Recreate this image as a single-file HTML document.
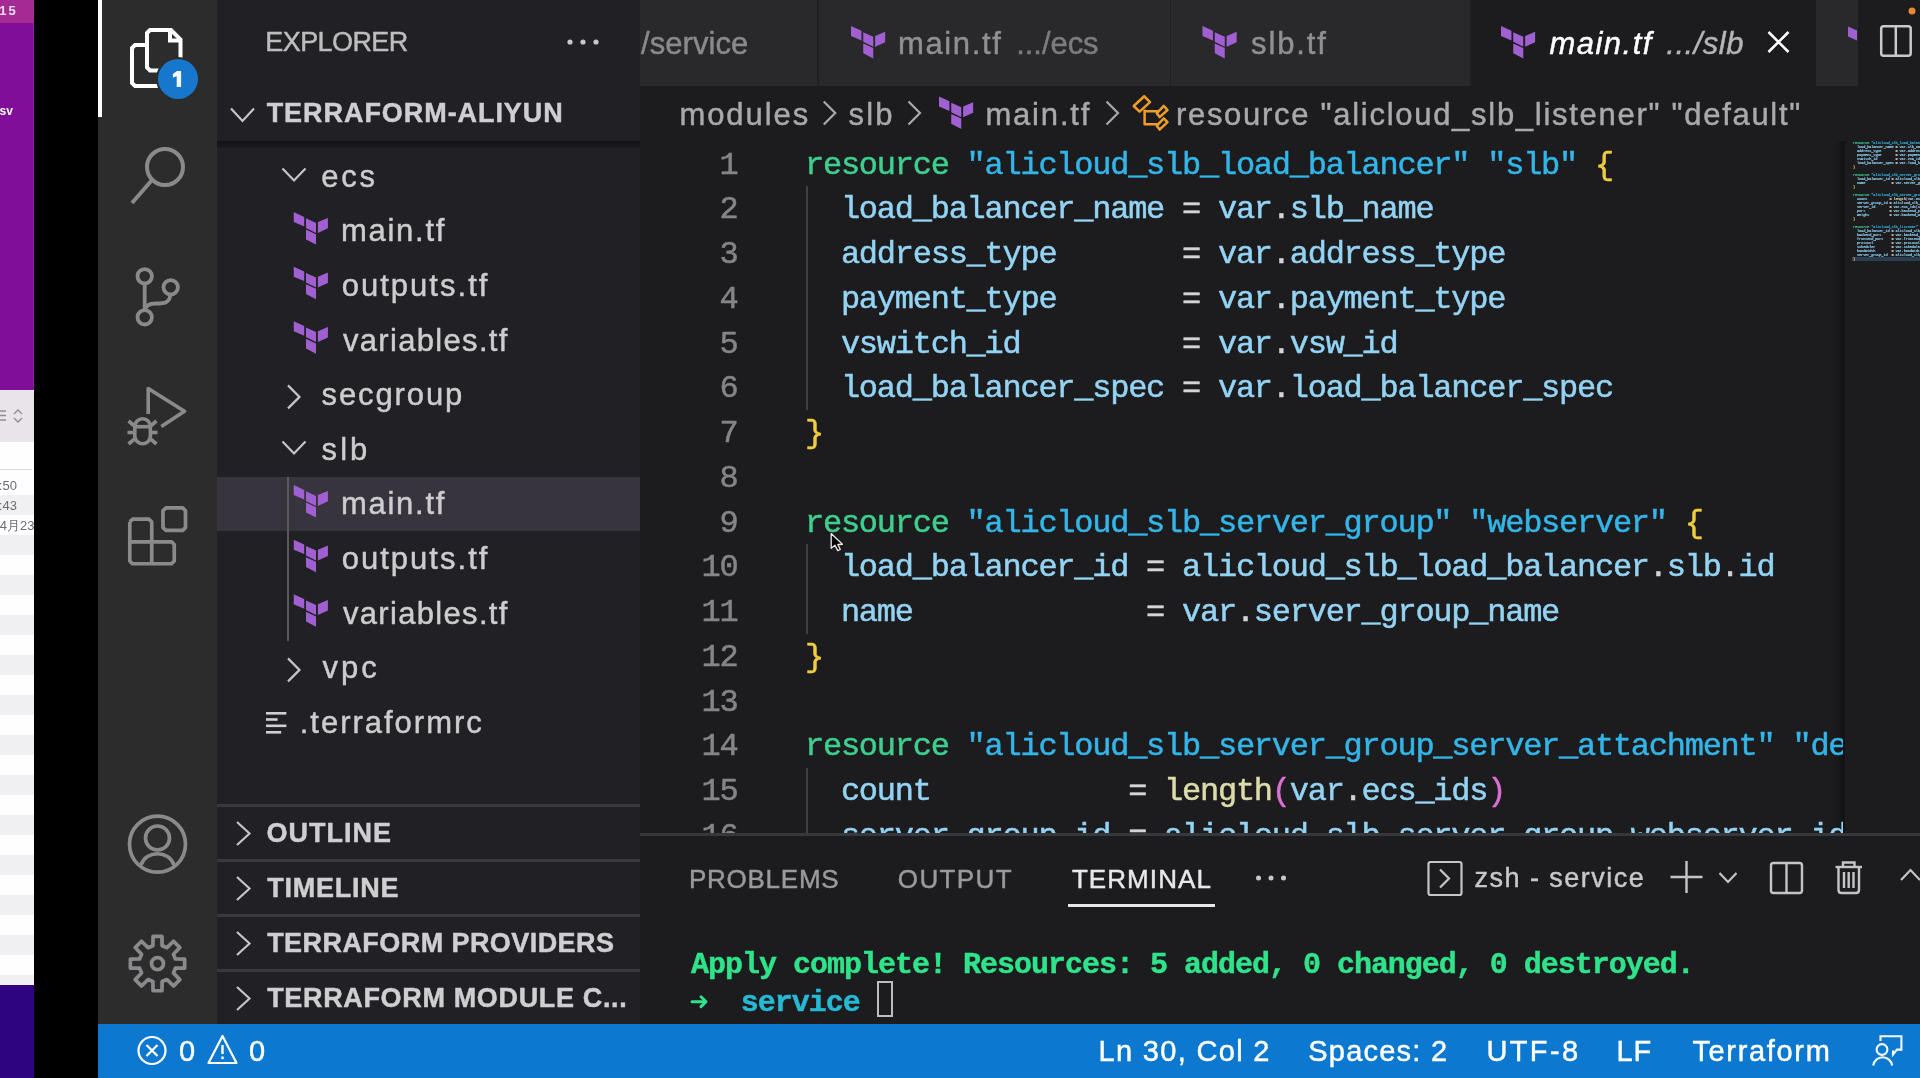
<!DOCTYPE html>
<html><head><meta charset="utf-8"><style>
html,body{margin:0;padding:0;width:1920px;height:1078px;overflow:hidden;background:#1c1b1e}
body{will-change:transform;filter:blur(0.45px)}
body>div{position:absolute}
.t{-webkit-text-stroke:0.45px currentColor}
.c{-webkit-text-stroke:0.5px currentColor}
svg{position:absolute;overflow:visible}
</style></head><body>
<div style="left:0px;top:0px;width:34px;height:390px;background:#810e99;"></div>
<div style="left:33px;top:0px;width:1.5px;height:390px;background:#8c1ca3;"></div>
<div style="left:0px;top:0px;width:34px;height:23px;background:#a52a93;"></div>
<div class="t" style="left:-0.80px;top:3.50px;font-family:'Liberation Sans', sans-serif;font-size:13px;line-height:13px;font-weight:bold;font-style:normal;letter-spacing:2.000px;color:#f6dcf2;white-space:pre;-webkit-text-stroke:0">15</div>
<div class="t" style="left:-0.40px;top:104.84px;font-family:'Liberation Sans', sans-serif;font-size:12px;line-height:12px;font-weight:bold;font-style:normal;letter-spacing:0.000px;color:#ffffff;white-space:pre;-webkit-text-stroke:0">sv</div>
<div style="left:0px;top:390px;width:34px;height:52px;background:#e8e4ea;"></div>
<div style="left:0px;top:442px;width:34px;height:543px;background:#fefdff;"></div>
<div style="left:0px;top:469px;width:32px;height:1px;background:#dedbe0;"></div>
<div style="left:0px;top:495px;width:34px;height:19.5px;background:#f0eff2;"></div>
<div style="left:0px;top:535px;width:34px;height:19.5px;background:#f0eff2;"></div>
<div style="left:0px;top:575px;width:34px;height:19.5px;background:#f0eff2;"></div>
<div style="left:0px;top:615px;width:34px;height:19.5px;background:#f0eff2;"></div>
<div style="left:0px;top:655px;width:34px;height:19.5px;background:#f0eff2;"></div>
<div style="left:0px;top:695px;width:34px;height:19.5px;background:#f0eff2;"></div>
<div style="left:0px;top:735px;width:34px;height:19.5px;background:#f0eff2;"></div>
<div style="left:0px;top:775px;width:34px;height:19.5px;background:#f0eff2;"></div>
<div style="left:0px;top:815px;width:34px;height:19.5px;background:#f0eff2;"></div>
<div style="left:0px;top:855px;width:34px;height:19.5px;background:#f0eff2;"></div>
<div style="left:0px;top:895px;width:34px;height:19.5px;background:#f0eff2;"></div>
<div style="left:0px;top:935px;width:34px;height:19.5px;background:#f0eff2;"></div>
<div style="left:0px;top:975px;width:34px;height:10px;background:#f0eff2;"></div>
<div class="t" style="left:-1.20px;top:479.00px;font-family:'Liberation Sans', sans-serif;font-size:13px;line-height:13px;font-weight:normal;font-style:normal;letter-spacing:0.000px;color:#6e6e70;white-space:pre;-webkit-text-stroke:0">:50</div>
<div class="t" style="left:-1.20px;top:499.00px;font-family:'Liberation Sans', sans-serif;font-size:13px;line-height:13px;font-weight:normal;font-style:normal;letter-spacing:0.000px;color:#6e6e70;white-space:pre;-webkit-text-stroke:0">:43</div>
<div class="t" style="left:-0.30px;top:519.00px;font-family:'Liberation Sans', sans-serif;font-size:13px;line-height:13px;font-weight:normal;font-style:normal;letter-spacing:0.000px;color:#6e6e70;white-space:pre;-webkit-text-stroke:0">4月23</div>
<svg style="position:absolute;left:0px;top:400px" width="34" height="30" viewBox="0 400 34 30"><g stroke="#8e8e92" stroke-width="1.3" fill="none"><path d="M0,411H6M0,415.5H6M0,420H6"/><path d="M14,414L18,410L22,414M14,418L18,422L22,418"/></g></svg>
<div style="left:0px;top:985px;width:34px;height:93px;background:#2e0481;"></div>
<div style="left:34px;top:0px;width:64px;height:1078px;background:#000000;"></div>
<div style="left:98px;top:0px;width:119px;height:1024px;background:#2c2c2d;"></div>
<div style="left:98px;top:0px;width:4px;height:117px;background:#ffffff;"></div>
<svg style="position:absolute;left:98px;top:0px" width="119" height="120" viewBox="98 0 119 120"><g fill="none" stroke="#ffffff" stroke-width="4" stroke-linejoin="miter"><path d="M147,33 L150,30 L171,30 L180.5,39.5 L180.5,68 L177.5,70.5 L150,70.5 L147,67.5 Z"/><path d="M170,31 L170,40.5 L180,40.5"/><path d="M147,45 L135,45 L132,48 L132,83 L135,86 L165,86"/></g><circle cx="178" cy="78.9" r="22" fill="#2c2c2d"/><circle cx="178" cy="78.9" r="20" fill="#1677cc"/></svg>
<svg style="position:absolute;left:160px;top:60px" width="40" height="40" viewBox="160 60 40 40"><path d="M172.9,74 L177,71.1 L181.1,71.1 L181.1,86.9 L176.7,86.9 L176.7,76.2 L172.9,77.6Z" fill="#f4fbff"/></svg>
<svg style="position:absolute;left:98px;top:130px" width="119" height="90" viewBox="98 130 119 90"><g fill="none" stroke="#8a8a8c" stroke-width="4"><circle cx="165" cy="167" r="18"/><path d="M152,180 L132,203" stroke-linecap="butt"/></g></svg>
<svg style="position:absolute;left:98px;top:250px" width="119" height="90" viewBox="98 250 119 90"><g fill="none" stroke="#8a8a8c" stroke-width="3.8"><circle cx="144.7" cy="276.3" r="7.2"/><circle cx="170.7" cy="287.3" r="7.2"/><circle cx="144.7" cy="317.3" r="7.2"/><path d="M144.7,283.5 V310"/><path d="M170.2,294.5 C170,303 164,303.5 156,303.5 C149,303.5 145.5,306 144.7,310"/></g></svg>
<svg style="position:absolute;left:98px;top:370px" width="119" height="90" viewBox="98 370 119 90"><g fill="none" stroke="#8a8a8c" stroke-width="3.6"><path d="M148.2,414 V388.5 L184.5,411.3 L161.3,426.5" stroke-linejoin="round"/><path d="M134.8,426.5 A7.8,7.8 0 0 1 150.4,426.5 V436 A7.8,7.8 0 0 1 134.8,436 Z"/><path d="M134,426.7 H151"/><path d="M128.5,421 L134.5,426 M156.5,421 L150.5,426 M127.5,432.5 H133.5 M151.5,432.5 H157.5 M128.5,444 L134.5,439 M156.5,444 L150.5,439"/></g></svg>
<svg style="position:absolute;left:98px;top:490px" width="119" height="90" viewBox="98 490 119 90"><g fill="none" stroke="#8a8a8c" stroke-width="3.7" stroke-linejoin="round"><path d="M129.8,522 L132.5,519.2 L149,519.2 L151.75,522 V563.75 M129.8,522 V561 L132.5,563.75 H171.5 L174.25,561 V544.5 L171.5,541.8 H129.8"/><path d="M166,507.9 H182.7 L185.5,510.7 V527.6 L182.7,530.4 H166 L163,527.6 V510.7 Z"/></g></svg>
<svg style="position:absolute;left:98px;top:800px" width="119" height="90" viewBox="98 800 119 90"><g fill="none" stroke="#8a8a8c" stroke-width="3.7"><circle cx="157.5" cy="844.2" r="28"/><circle cx="157.5" cy="838" r="12"/><path d="M141,865 C146,850 169,850 174,865"/></g></svg>
<svg style="position:absolute;left:98px;top:920px" width="119" height="90" viewBox="98 920 119 90"><g fill="none" stroke="#8a8a8c" stroke-width="3.7" stroke-linejoin="round"><path d="M152.90,945.68 L153.03,936.47 L161.97,936.47 L162.10,945.68 L166.92,947.68 L173.52,941.25 L179.85,947.58 L173.42,954.18 L175.42,959.00 L184.63,959.13 L184.63,968.07 L175.42,968.20 L173.42,973.02 L179.85,979.62 L173.52,985.95 L166.92,979.52 L162.10,981.52 L161.97,990.73 L153.03,990.73 L152.90,981.52 L148.08,979.52 L141.48,985.95 L135.15,979.62 L141.58,973.02 L139.58,968.20 L130.37,968.07 L130.37,959.13 L139.58,959.00 L141.58,954.18 L135.15,947.58 L141.48,941.25 L148.08,947.68Z"/><circle cx="157.5" cy="963.6" r="6"/></g></svg>
<div style="left:217px;top:0px;width:423px;height:1024px;background:#212024;"></div>
<div class="t" style="left:265.30px;top:29.14px;font-family:'Liberation Sans', sans-serif;font-size:27px;line-height:27px;font-weight:normal;font-style:normal;letter-spacing:-0.586px;color:#bdbdbf;white-space:pre;">EXPLORER</div>
<svg style="position:absolute;left:540px;top:30px" width="80" height="30" viewBox="540 30 80 30"><g fill="#c8c8c8"><circle cx="570" cy="42" r="2.6"/><circle cx="583" cy="42" r="2.6"/><circle cx="596" cy="42" r="2.6"/></g></svg>
<svg style="position:absolute;left:0px;top:0px" width="1920" height="1078" viewBox="0 0 1920 1078"><path d="M231,108.5 L242.5,121 L254,108.5" fill="none" stroke="#c5c5c7" stroke-width="2.2"/></svg>
<div class="t" style="left:266.70px;top:99.64px;font-family:'Liberation Sans', sans-serif;font-size:27px;line-height:27px;font-weight:bold;font-style:normal;letter-spacing:0.940px;color:#cfcfd2;white-space:pre;">TERRAFORM-ALIYUN</div>
<div style="left:217px;top:141px;width:423px;height:7px;background:linear-gradient(#131216,#1b1a1e);"></div>
<div style="left:217px;top:476.5px;width:423px;height:54.5px;background:#37343d;"></div>
<div style="left:287px;top:476.5px;width:2px;height:164.5px;background:#5a5960;"></div>
<div class="t" style="left:321.20px;top:160.76px;font-family:'Liberation Sans', sans-serif;font-size:31px;line-height:31px;font-weight:normal;font-style:normal;letter-spacing:2.725px;color:#cdcdcf;white-space:pre;">ecs</div>
<div class="t" style="left:340.90px;top:215.36px;font-family:'Liberation Sans', sans-serif;font-size:31px;line-height:31px;font-weight:normal;font-style:normal;letter-spacing:1.750px;color:#cdcdcf;white-space:pre;">main.tf</div>
<div class="t" style="left:341.70px;top:269.96px;font-family:'Liberation Sans', sans-serif;font-size:31px;line-height:31px;font-weight:normal;font-style:normal;letter-spacing:2.022px;color:#cdcdcf;white-space:pre;">outputs.tf</div>
<div class="t" style="left:342.90px;top:324.56px;font-family:'Liberation Sans', sans-serif;font-size:31px;line-height:31px;font-weight:normal;font-style:normal;letter-spacing:1.327px;color:#cdcdcf;white-space:pre;">variables.tf</div>
<div class="t" style="left:321.60px;top:379.16px;font-family:'Liberation Sans', sans-serif;font-size:31px;line-height:31px;font-weight:normal;font-style:normal;letter-spacing:1.886px;color:#cdcdcf;white-space:pre;">secgroup</div>
<div class="t" style="left:321.60px;top:433.76px;font-family:'Liberation Sans', sans-serif;font-size:31px;line-height:31px;font-weight:normal;font-style:normal;letter-spacing:3.050px;color:#cdcdcf;white-space:pre;">slb</div>
<div class="t" style="left:340.90px;top:488.36px;font-family:'Liberation Sans', sans-serif;font-size:31px;line-height:31px;font-weight:normal;font-style:normal;letter-spacing:1.750px;color:#cdcdcf;white-space:pre;">main.tf</div>
<div class="t" style="left:341.70px;top:542.96px;font-family:'Liberation Sans', sans-serif;font-size:31px;line-height:31px;font-weight:normal;font-style:normal;letter-spacing:2.022px;color:#cdcdcf;white-space:pre;">outputs.tf</div>
<div class="t" style="left:342.90px;top:597.56px;font-family:'Liberation Sans', sans-serif;font-size:31px;line-height:31px;font-weight:normal;font-style:normal;letter-spacing:1.327px;color:#cdcdcf;white-space:pre;">variables.tf</div>
<div class="t" style="left:322.40px;top:652.16px;font-family:'Liberation Sans', sans-serif;font-size:31px;line-height:31px;font-weight:normal;font-style:normal;letter-spacing:3.100px;color:#cdcdcf;white-space:pre;">vpc</div>
<div class="t" style="left:299.70px;top:706.76px;font-family:'Liberation Sans', sans-serif;font-size:31px;line-height:31px;font-weight:normal;font-style:normal;letter-spacing:1.991px;color:#cdcdcf;white-space:pre;">.terraformrc</div>
<svg style="position:absolute;left:0px;top:0px" width="1920" height="1078" viewBox="0 0 1920 1078"><path d="M282.5,168.5 L294,180.5 L305.5,168.5" fill="none" stroke="#c5c5c7" stroke-width="2.2"/><path d="M293.75,212.10 L304.20,216.90 L304.20,226.50 L293.75,222.10Z M306.00,218.35 L316.00,222.90 L316.00,232.90 L306.00,227.90Z M306.00,229.60 L316.00,234.20 L316.00,244.60 L306.00,239.40Z M317.90,222.10 L327.90,217.90 L327.90,228.35 L317.90,232.90Z " fill="#a060d2"/><path d="M293.75,266.70 L304.20,271.50 L304.20,281.10 L293.75,276.70Z M306.00,272.95 L316.00,277.50 L316.00,287.50 L306.00,282.50Z M306.00,284.20 L316.00,288.80 L316.00,299.20 L306.00,294.00Z M317.90,276.70 L327.90,272.50 L327.90,282.95 L317.90,287.50Z " fill="#a060d2"/><path d="M293.75,321.30 L304.20,326.10 L304.20,335.70 L293.75,331.30Z M306.00,327.55 L316.00,332.10 L316.00,342.10 L306.00,337.10Z M306.00,338.80 L316.00,343.40 L316.00,353.80 L306.00,348.60Z M317.90,331.30 L327.90,327.10 L327.90,337.55 L317.90,342.10Z " fill="#a060d2"/><path d="M288,385.4 L299.5,396.9 L288,408.4" fill="none" stroke="#c5c5c7" stroke-width="2.2"/><path d="M282.5,441.5 L294,453.5 L305.5,441.5" fill="none" stroke="#c5c5c7" stroke-width="2.2"/><path d="M293.75,485.10 L304.20,489.90 L304.20,499.50 L293.75,495.10Z M306.00,491.35 L316.00,495.90 L316.00,505.90 L306.00,500.90Z M306.00,502.60 L316.00,507.20 L316.00,517.60 L306.00,512.40Z M317.90,495.10 L327.90,490.90 L327.90,501.35 L317.90,505.90Z " fill="#a060d2"/><path d="M293.75,539.70 L304.20,544.50 L304.20,554.10 L293.75,549.70Z M306.00,545.95 L316.00,550.50 L316.00,560.50 L306.00,555.50Z M306.00,557.20 L316.00,561.80 L316.00,572.20 L306.00,567.00Z M317.90,549.70 L327.90,545.50 L327.90,555.95 L317.90,560.50Z " fill="#a060d2"/><path d="M293.75,594.30 L304.20,599.10 L304.20,608.70 L293.75,604.30Z M306.00,600.55 L316.00,605.10 L316.00,615.10 L306.00,610.10Z M306.00,611.80 L316.00,616.40 L316.00,626.80 L306.00,621.60Z M317.90,604.30 L327.90,600.10 L327.90,610.55 L317.90,615.10Z " fill="#a060d2"/><path d="M288,658.4000000000001 L299.5,669.9000000000001 L288,681.4000000000001" fill="none" stroke="#c5c5c7" stroke-width="2.2"/><rect x="266" y="712.0" width="20.399999999999977" height="2.6" fill="#d0d0d4"/><rect x="266" y="718.2" width="11.600000000000023" height="2.6" fill="#d0d0d4"/><rect x="266" y="724.5" width="20.399999999999977" height="2.6" fill="#d0d0d4"/><rect x="266" y="731.0" width="15.199999999999989" height="2.6" fill="#d0d0d4"/></svg>
<div style="left:217px;top:804px;width:423px;height:2.5px;background:#39383d;"></div>
<div class="t" style="left:266.40px;top:820.14px;font-family:'Liberation Sans', sans-serif;font-size:27px;line-height:27px;font-weight:bold;font-style:normal;letter-spacing:1.017px;color:#cfcfd2;white-space:pre;">OUTLINE</div>
<svg style="position:absolute;left:0px;top:0px" width="1920" height="1078" viewBox="0 0 1920 1078"><path d="M237,822 L249.5,833.5 L237,845" fill="none" stroke="#c5c5c7" stroke-width="2.2"/></svg>
<div style="left:217px;top:859px;width:423px;height:2.5px;background:#39383d;"></div>
<div class="t" style="left:267.20px;top:875.14px;font-family:'Liberation Sans', sans-serif;font-size:27px;line-height:27px;font-weight:bold;font-style:normal;letter-spacing:0.757px;color:#cfcfd2;white-space:pre;">TIMELINE</div>
<svg style="position:absolute;left:0px;top:0px" width="1920" height="1078" viewBox="0 0 1920 1078"><path d="M237,877 L249.5,888.5 L237,900" fill="none" stroke="#c5c5c7" stroke-width="2.2"/></svg>
<div style="left:217px;top:914px;width:423px;height:2.5px;background:#39383d;"></div>
<div class="t" style="left:267.20px;top:930.14px;font-family:'Liberation Sans', sans-serif;font-size:27px;line-height:27px;font-weight:bold;font-style:normal;letter-spacing:0.433px;color:#cfcfd2;white-space:pre;">TERRAFORM PROVIDERS</div>
<svg style="position:absolute;left:0px;top:0px" width="1920" height="1078" viewBox="0 0 1920 1078"><path d="M237,932 L249.5,943.5 L237,955" fill="none" stroke="#c5c5c7" stroke-width="2.2"/></svg>
<div style="left:217px;top:969px;width:423px;height:2.5px;background:#39383d;"></div>
<div class="t" style="left:267.20px;top:985.14px;font-family:'Liberation Sans', sans-serif;font-size:27px;line-height:27px;font-weight:bold;font-style:normal;letter-spacing:0.655px;color:#cfcfd2;white-space:pre;">TERRAFORM MODULE C...</div>
<svg style="position:absolute;left:0px;top:0px" width="1920" height="1078" viewBox="0 0 1920 1078"><path d="M237,987 L249.5,998.5 L237,1010" fill="none" stroke="#c5c5c7" stroke-width="2.2"/></svg>
<div style="left:640px;top:0px;width:1280px;height:86px;background:#1c1b1e;"></div>
<div style="left:640px;top:0px;width:177px;height:86px;background:#29282b;"></div>
<div style="left:817px;top:0px;width:1.5px;height:86px;background:#1f1e21;"></div>
<div style="left:818.5px;top:0px;width:351px;height:86px;background:#29282b;"></div>
<div style="left:1169.5px;top:0px;width:1.5px;height:86px;background:#1f1e21;"></div>
<div style="left:1171px;top:0px;width:299px;height:86px;background:#29282b;"></div>
<div style="left:1470px;top:0px;width:1.5px;height:86px;background:#1f1e21;"></div>
<div style="left:1816px;top:0px;width:41.5px;height:86px;background:#29282b;"></div>
<div class="t" style="left:641.00px;top:27.76px;font-family:'Liberation Sans', sans-serif;font-size:31px;line-height:31px;font-weight:normal;font-style:normal;letter-spacing:0.071px;color:#8a8a8c;white-space:pre;">/service</div>
<div class="t" style="left:897.90px;top:27.76px;font-family:'Liberation Sans', sans-serif;font-size:31px;line-height:31px;font-weight:normal;font-style:normal;letter-spacing:1.667px;color:#909092;white-space:pre;">main.tf</div>
<div class="t" style="left:1016.20px;top:27.76px;font-family:'Liberation Sans', sans-serif;font-size:31px;line-height:31px;font-weight:normal;font-style:normal;letter-spacing:-0.050px;color:#7c7c7e;white-space:pre;">.../ecs</div>
<div class="t" style="left:1251.10px;top:27.76px;font-family:'Liberation Sans', sans-serif;font-size:31px;line-height:31px;font-weight:normal;font-style:normal;letter-spacing:1.860px;color:#909092;white-space:pre;">slb.tf</div>
<div class="t" style="left:1549.50px;top:27.76px;font-family:'Liberation Sans', sans-serif;font-size:31px;line-height:31px;font-weight:normal;font-style:italic;letter-spacing:1.467px;color:#ffffff;white-space:pre;">main.tf</div>
<div class="t" style="left:1666.30px;top:27.76px;font-family:'Liberation Sans', sans-serif;font-size:31px;line-height:31px;font-weight:normal;font-style:italic;letter-spacing:0.517px;color:#b5b5b7;white-space:pre;">.../slb</div>
<svg style="position:absolute;left:640px;top:0px" width="1280" height="90" viewBox="640 0 1280 90"><path d="M851.00,26.00 L861.45,30.80 L861.45,40.40 L851.00,36.00Z M863.25,32.25 L873.25,36.80 L873.25,46.80 L863.25,41.80Z M863.25,43.50 L873.25,48.10 L873.25,58.50 L863.25,53.30Z M875.15,36.00 L885.15,31.80 L885.15,42.25 L875.15,46.80Z " fill="#a060d2"/><path d="M1202.50,26.00 L1212.95,30.80 L1212.95,40.40 L1202.50,36.00Z M1214.75,32.25 L1224.75,36.80 L1224.75,46.80 L1214.75,41.80Z M1214.75,43.50 L1224.75,48.10 L1224.75,58.50 L1214.75,53.30Z M1226.65,36.00 L1236.65,31.80 L1236.65,42.25 L1226.65,46.80Z " fill="#a060d2"/><path d="M1501.00,26.00 L1511.45,30.80 L1511.45,40.40 L1501.00,36.00Z M1513.25,32.25 L1523.25,36.80 L1523.25,46.80 L1513.25,41.80Z M1513.25,43.50 L1523.25,48.10 L1523.25,58.50 L1513.25,53.30Z M1525.15,36.00 L1535.15,31.80 L1535.15,42.25 L1525.15,46.80Z " fill="#a060d2"/><path d="M1768.5,32 L1788.5,52 M1788.5,32 L1768.5,52" stroke="#ffffff" stroke-width="2.6"/><path d="M1848,26.5 L1857,30.6 L1857,40.5 L1848,36.5Z" fill="#a060d2"/><rect x="1881.2" y="26.2" width="29.5" height="29.5" rx="2.5" fill="none" stroke="#c9c9cb" stroke-width="2.5"/><path d="M1895.8,26 V56" stroke="#c9c9cb" stroke-width="2.5"/><circle cx="1912" cy="11" r="3.5" fill="#e88a2e"/></svg>
<div class="t" style="left:679.40px;top:98.76px;font-family:'Liberation Sans', sans-serif;font-size:31px;line-height:31px;font-weight:normal;font-style:normal;letter-spacing:1.958px;color:#a9a9ab;white-space:pre;">modules</div>
<div class="t" style="left:848.50px;top:98.76px;font-family:'Liberation Sans', sans-serif;font-size:31px;line-height:31px;font-weight:normal;font-style:normal;letter-spacing:2.225px;color:#a9a9ab;white-space:pre;">slb</div>
<div class="t" style="left:985.40px;top:98.76px;font-family:'Liberation Sans', sans-serif;font-size:31px;line-height:31px;font-weight:normal;font-style:normal;letter-spacing:1.833px;color:#a9a9ab;white-space:pre;">main.tf</div>
<div class="t" style="left:1175.90px;top:98.76px;font-family:'Liberation Sans', sans-serif;font-size:31px;line-height:31px;font-weight:normal;font-style:normal;letter-spacing:1.715px;color:#a9a9ab;white-space:pre;">resource &quot;alicloud_slb_listener&quot; &quot;default&quot;</div>
<svg style="position:absolute;left:640px;top:86px" width="1280" height="50" viewBox="640 86 1280 50"><path d="M823.75,101.5 L835.25,113 L823.75,124.5" fill="none" stroke="#a9a9ab" stroke-width="2.2"/><path d="M908.5,101.5 L920.0,113 L908.5,124.5" fill="none" stroke="#a9a9ab" stroke-width="2.2"/><path d="M1106.5,101.5 L1118.0,113 L1106.5,124.5" fill="none" stroke="#a9a9ab" stroke-width="2.2"/><path d="M939.00,96.50 L949.45,101.30 L949.45,110.90 L939.00,106.50Z M951.25,102.75 L961.25,107.30 L961.25,117.30 L951.25,112.30Z M951.25,114.00 L961.25,118.60 L961.25,129.00 L951.25,123.80Z M963.15,106.50 L973.15,102.30 L973.15,112.75 L963.15,117.30Z " fill="#a060d2"/><g fill="none" stroke="#ee9d28" stroke-width="2.5" stroke-linejoin="round"><path d="M1144.2,96.25 L1150,102.1 L1139.6,111.7 L1133.75,106Z"/><path d="M1163.75,105.8 L1167.5,110 L1159.6,117.1 L1156.7,113.3Z"/><path d="M1163.75,118.3 L1167.5,122.1 L1159.6,129.6 L1156.7,125.8Z"/><path d="M1144.6,109.6 V124.2 H1158 M1144.6,111.25 H1158"/></g></svg>
<div style="left:1833px;top:141px;width:12px;height:692px;background:linear-gradient(to right, rgba(0,0,0,0), rgba(0,0,0,0.35));"></div>
<div class="c" style="left:805px;top:143.5px;width:1038px;height:689.5px;overflow:hidden;font-family:'Liberation Mono', monospace;font-size:32px;letter-spacing:-1.25px;white-space:pre"><div style="position:absolute;left:0;top:0.00px;height:44.75px;line-height:44.75px"><span style="color:#3ecf8e">resource</span><span style="color:#d4d4d4"> </span><span style="color:#36b5e8">&quot;</span><span style="color:#33b5e8">alicloud_slb_load_balancer</span><span style="color:#36b5e8">&quot;</span><span style="color:#d4d4d4"> </span><span style="color:#36b5e8">&quot;</span><span style="color:#33b5e8">slb</span><span style="color:#36b5e8">&quot;</span><span style="color:#d4d4d4"> </span><span style="color:#f0cc40">{</span></div><div style="position:absolute;left:0;top:44.75px;height:44.75px;line-height:44.75px"><span style="color:#93d3f3">  load_balancer_name</span><span style="color:#d4d4d4"> = </span><span style="color:#93d3f3">var</span><span style="color:#d4d4d4">.</span><span style="color:#93d3f3">slb_name</span></div><div style="position:absolute;left:0;top:89.50px;height:44.75px;line-height:44.75px"><span style="color:#93d3f3">  address_type</span><span style="color:#d4d4d4">       = </span><span style="color:#93d3f3">var</span><span style="color:#d4d4d4">.</span><span style="color:#93d3f3">address_type</span></div><div style="position:absolute;left:0;top:134.25px;height:44.75px;line-height:44.75px"><span style="color:#93d3f3">  payment_type</span><span style="color:#d4d4d4">       = </span><span style="color:#93d3f3">var</span><span style="color:#d4d4d4">.</span><span style="color:#93d3f3">payment_type</span></div><div style="position:absolute;left:0;top:179.00px;height:44.75px;line-height:44.75px"><span style="color:#93d3f3">  vswitch_id</span><span style="color:#d4d4d4">         = </span><span style="color:#93d3f3">var</span><span style="color:#d4d4d4">.</span><span style="color:#93d3f3">vsw_id</span></div><div style="position:absolute;left:0;top:223.75px;height:44.75px;line-height:44.75px"><span style="color:#93d3f3">  load_balancer_spec</span><span style="color:#d4d4d4"> = </span><span style="color:#93d3f3">var</span><span style="color:#d4d4d4">.</span><span style="color:#93d3f3">load_balancer_spec</span></div><div style="position:absolute;left:0;top:268.50px;height:44.75px;line-height:44.75px"><span style="color:#f0cc40">}</span></div><div style="position:absolute;left:0;top:313.25px;height:44.75px;line-height:44.75px"></div><div style="position:absolute;left:0;top:358.00px;height:44.75px;line-height:44.75px"><span style="color:#3ecf8e">resource</span><span style="color:#d4d4d4"> </span><span style="color:#36b5e8">&quot;</span><span style="color:#33b5e8">alicloud_slb_server_group</span><span style="color:#36b5e8">&quot;</span><span style="color:#d4d4d4"> </span><span style="color:#36b5e8">&quot;</span><span style="color:#33b5e8">webserver</span><span style="color:#36b5e8">&quot;</span><span style="color:#d4d4d4"> </span><span style="color:#f0cc40">{</span></div><div style="position:absolute;left:0;top:402.75px;height:44.75px;line-height:44.75px"><span style="color:#93d3f3">  load_balancer_id</span><span style="color:#d4d4d4"> = </span><span style="color:#93d3f3">alicloud_slb_load_balancer</span><span style="color:#d4d4d4">.</span><span style="color:#93d3f3">slb</span><span style="color:#d4d4d4">.</span><span style="color:#93d3f3">id</span></div><div style="position:absolute;left:0;top:447.50px;height:44.75px;line-height:44.75px"><span style="color:#93d3f3">  name</span><span style="color:#d4d4d4">             = </span><span style="color:#93d3f3">var</span><span style="color:#d4d4d4">.</span><span style="color:#93d3f3">server_group_name</span></div><div style="position:absolute;left:0;top:492.25px;height:44.75px;line-height:44.75px"><span style="color:#f0cc40">}</span></div><div style="position:absolute;left:0;top:537.00px;height:44.75px;line-height:44.75px"></div><div style="position:absolute;left:0;top:581.75px;height:44.75px;line-height:44.75px"><span style="color:#3ecf8e">resource</span><span style="color:#d4d4d4"> </span><span style="color:#36b5e8">&quot;</span><span style="color:#33b5e8">alicloud_slb_server_group_server_attachment</span><span style="color:#36b5e8">&quot;</span><span style="color:#d4d4d4"> </span><span style="color:#36b5e8">&quot;</span><span style="color:#33b5e8">default</span><span style="color:#36b5e8">&quot;</span><span style="color:#d4d4d4"> </span><span style="color:#f0cc40">{</span></div><div style="position:absolute;left:0;top:626.50px;height:44.75px;line-height:44.75px"><span style="color:#93d3f3">  count</span><span style="color:#d4d4d4">           = </span><span style="color:#dcdcaa">length</span><span style="color:#da70d6">(</span><span style="color:#93d3f3">var</span><span style="color:#d4d4d4">.</span><span style="color:#93d3f3">ecs_ids</span><span style="color:#da70d6">)</span></div><div style="position:absolute;left:0;top:671.25px;height:44.75px;line-height:44.75px"><span style="color:#93d3f3">  server_group_id</span><span style="color:#d4d4d4"> = </span><span style="color:#93d3f3">alicloud_slb_server_group</span><span style="color:#d4d4d4">.</span><span style="color:#93d3f3">webserver</span><span style="color:#d4d4d4">.</span><span style="color:#93d3f3">id</span></div></div>
<div class="c" style="left:637.5px;top:143.5px;width:100px;height:689.5px;overflow:hidden;font-family:'Liberation Mono', monospace;font-size:32px;letter-spacing:-1.25px;color:#858587;white-space:pre"><div style="position:absolute;right:0;top:0.00px;height:44.75px;line-height:44.75px">1</div><div style="position:absolute;right:0;top:44.75px;height:44.75px;line-height:44.75px">2</div><div style="position:absolute;right:0;top:89.50px;height:44.75px;line-height:44.75px">3</div><div style="position:absolute;right:0;top:134.25px;height:44.75px;line-height:44.75px">4</div><div style="position:absolute;right:0;top:179.00px;height:44.75px;line-height:44.75px">5</div><div style="position:absolute;right:0;top:223.75px;height:44.75px;line-height:44.75px">6</div><div style="position:absolute;right:0;top:268.50px;height:44.75px;line-height:44.75px">7</div><div style="position:absolute;right:0;top:313.25px;height:44.75px;line-height:44.75px">8</div><div style="position:absolute;right:0;top:358.00px;height:44.75px;line-height:44.75px">9</div><div style="position:absolute;right:0;top:402.75px;height:44.75px;line-height:44.75px">10</div><div style="position:absolute;right:0;top:447.50px;height:44.75px;line-height:44.75px">11</div><div style="position:absolute;right:0;top:492.25px;height:44.75px;line-height:44.75px">12</div><div style="position:absolute;right:0;top:537.00px;height:44.75px;line-height:44.75px">13</div><div style="position:absolute;right:0;top:581.75px;height:44.75px;line-height:44.75px">14</div><div style="position:absolute;right:0;top:626.50px;height:44.75px;line-height:44.75px">15</div><div style="position:absolute;right:0;top:671.25px;height:44.75px;line-height:44.75px">16</div></div>
<div style="left:806px;top:186px;width:2px;height:224px;background:#404044;"></div>
<div style="left:806px;top:544px;width:2px;height:90px;background:#404044;"></div>
<div style="left:806px;top:768px;width:2px;height:90px;background:#404044;"></div>
<div style="left:806px;top:768px;width:2px;height:65px;background:#404044;"></div>
<div style="left:1852px;top:257px;width:68px;height:4px;background:#2b3d52;"></div>
<div style="left:1852.7px;top:141px;width:9000px;height:1342.5px;transform-origin:0 0;transform:scale(0.1128,0.0898);font-family:'Liberation Mono', monospace;font-size:32px;letter-spacing:-1.25px;white-space:pre;-webkit-text-stroke:1.5px currentColor"><div style="position:absolute;left:0;top:0.00px;height:44.75px;line-height:44.75px"><span style="color:#3ecf8e">resource</span><span style="color:#d4d4d4"> </span><span style="color:#36b5e8">&quot;</span><span style="color:#33b5e8">alicloud_slb_load_balancer</span><span style="color:#36b5e8">&quot;</span><span style="color:#d4d4d4"> </span><span style="color:#36b5e8">&quot;</span><span style="color:#33b5e8">slb</span><span style="color:#36b5e8">&quot;</span><span style="color:#d4d4d4"> </span><span style="color:#f0cc40">{</span></div><div style="position:absolute;left:0;top:44.75px;height:44.75px;line-height:44.75px"><span style="color:#93d3f3">  load_balancer_name</span><span style="color:#d4d4d4"> = </span><span style="color:#93d3f3">var</span><span style="color:#d4d4d4">.</span><span style="color:#93d3f3">slb_name</span></div><div style="position:absolute;left:0;top:89.50px;height:44.75px;line-height:44.75px"><span style="color:#93d3f3">  address_type</span><span style="color:#d4d4d4">       = </span><span style="color:#93d3f3">var</span><span style="color:#d4d4d4">.</span><span style="color:#93d3f3">address_type</span></div><div style="position:absolute;left:0;top:134.25px;height:44.75px;line-height:44.75px"><span style="color:#93d3f3">  payment_type</span><span style="color:#d4d4d4">       = </span><span style="color:#93d3f3">var</span><span style="color:#d4d4d4">.</span><span style="color:#93d3f3">payment_type</span></div><div style="position:absolute;left:0;top:179.00px;height:44.75px;line-height:44.75px"><span style="color:#93d3f3">  vswitch_id</span><span style="color:#d4d4d4">         = </span><span style="color:#93d3f3">var</span><span style="color:#d4d4d4">.</span><span style="color:#93d3f3">vsw_id</span></div><div style="position:absolute;left:0;top:223.75px;height:44.75px;line-height:44.75px"><span style="color:#93d3f3">  load_balancer_spec</span><span style="color:#d4d4d4"> = </span><span style="color:#93d3f3">var</span><span style="color:#d4d4d4">.</span><span style="color:#93d3f3">load_balancer_spec</span></div><div style="position:absolute;left:0;top:268.50px;height:44.75px;line-height:44.75px"><span style="color:#f0cc40">}</span></div><div style="position:absolute;left:0;top:313.25px;height:44.75px;line-height:44.75px"></div><div style="position:absolute;left:0;top:358.00px;height:44.75px;line-height:44.75px"><span style="color:#3ecf8e">resource</span><span style="color:#d4d4d4"> </span><span style="color:#36b5e8">&quot;</span><span style="color:#33b5e8">alicloud_slb_server_group</span><span style="color:#36b5e8">&quot;</span><span style="color:#d4d4d4"> </span><span style="color:#36b5e8">&quot;</span><span style="color:#33b5e8">webserver</span><span style="color:#36b5e8">&quot;</span><span style="color:#d4d4d4"> </span><span style="color:#f0cc40">{</span></div><div style="position:absolute;left:0;top:402.75px;height:44.75px;line-height:44.75px"><span style="color:#93d3f3">  load_balancer_id</span><span style="color:#d4d4d4"> = </span><span style="color:#93d3f3">alicloud_slb_load_balancer</span><span style="color:#d4d4d4">.</span><span style="color:#93d3f3">slb</span><span style="color:#d4d4d4">.</span><span style="color:#93d3f3">id</span></div><div style="position:absolute;left:0;top:447.50px;height:44.75px;line-height:44.75px"><span style="color:#93d3f3">  name</span><span style="color:#d4d4d4">             = </span><span style="color:#93d3f3">var</span><span style="color:#d4d4d4">.</span><span style="color:#93d3f3">server_group_name</span></div><div style="position:absolute;left:0;top:492.25px;height:44.75px;line-height:44.75px"><span style="color:#f0cc40">}</span></div><div style="position:absolute;left:0;top:537.00px;height:44.75px;line-height:44.75px"></div><div style="position:absolute;left:0;top:581.75px;height:44.75px;line-height:44.75px"><span style="color:#3ecf8e">resource</span><span style="color:#d4d4d4"> </span><span style="color:#36b5e8">&quot;</span><span style="color:#33b5e8">alicloud_slb_server_group_server_attachment</span><span style="color:#36b5e8">&quot;</span><span style="color:#d4d4d4"> </span><span style="color:#36b5e8">&quot;</span><span style="color:#33b5e8">default</span><span style="color:#36b5e8">&quot;</span><span style="color:#d4d4d4"> </span><span style="color:#f0cc40">{</span></div><div style="position:absolute;left:0;top:626.50px;height:44.75px;line-height:44.75px"><span style="color:#93d3f3">  count</span><span style="color:#d4d4d4">           = </span><span style="color:#dcdcaa">length</span><span style="color:#da70d6">(</span><span style="color:#93d3f3">var</span><span style="color:#d4d4d4">.</span><span style="color:#93d3f3">ecs_ids</span><span style="color:#da70d6">)</span></div><div style="position:absolute;left:0;top:671.25px;height:44.75px;line-height:44.75px"><span style="color:#93d3f3">  server_group_id</span><span style="color:#d4d4d4"> = </span><span style="color:#93d3f3">alicloud_slb_server_group</span><span style="color:#d4d4d4">.</span><span style="color:#93d3f3">webserver</span><span style="color:#d4d4d4">.</span><span style="color:#93d3f3">id</span></div><div style="position:absolute;left:0;top:716.00px;height:44.75px;line-height:44.75px"><span style="color:#93d3f3">  server_id</span><span style="color:#d4d4d4">       = </span><span style="color:#93d3f3">var</span><span style="color:#d4d4d4">.</span><span style="color:#93d3f3">ecs_ids</span><span style="color:#da70d6">[</span><span style="color:#93d3f3">count</span><span style="color:#d4d4d4">.</span><span style="color:#93d3f3">index</span><span style="color:#da70d6">]</span></div><div style="position:absolute;left:0;top:760.75px;height:44.75px;line-height:44.75px"><span style="color:#93d3f3">  port</span><span style="color:#d4d4d4">            = </span><span style="color:#93d3f3">var</span><span style="color:#d4d4d4">.</span><span style="color:#93d3f3">backend_port</span></div><div style="position:absolute;left:0;top:805.50px;height:44.75px;line-height:44.75px"><span style="color:#93d3f3">  weight</span><span style="color:#d4d4d4">          = </span><span style="color:#93d3f3">var</span><span style="color:#d4d4d4">.</span><span style="color:#93d3f3">backend_weight</span></div><div style="position:absolute;left:0;top:850.25px;height:44.75px;line-height:44.75px"><span style="color:#f0cc40">}</span></div><div style="position:absolute;left:0;top:895.00px;height:44.75px;line-height:44.75px"></div><div style="position:absolute;left:0;top:939.75px;height:44.75px;line-height:44.75px"><span style="color:#3ecf8e">resource</span><span style="color:#d4d4d4"> </span><span style="color:#36b5e8">&quot;</span><span style="color:#33b5e8">alicloud_slb_listener</span><span style="color:#36b5e8">&quot;</span><span style="color:#d4d4d4"> </span><span style="color:#36b5e8">&quot;</span><span style="color:#33b5e8">default</span><span style="color:#36b5e8">&quot;</span><span style="color:#d4d4d4"> </span><span style="color:#f0cc40">{</span></div><div style="position:absolute;left:0;top:984.50px;height:44.75px;line-height:44.75px"><span style="color:#93d3f3">  load_balancer_id</span><span style="color:#d4d4d4"> = </span><span style="color:#93d3f3">alicloud_slb_load_balancer</span><span style="color:#d4d4d4">.</span><span style="color:#93d3f3">slb</span><span style="color:#d4d4d4">.</span><span style="color:#93d3f3">id</span></div><div style="position:absolute;left:0;top:1029.25px;height:44.75px;line-height:44.75px"><span style="color:#93d3f3">  backend_port</span><span style="color:#d4d4d4">     = </span><span style="color:#93d3f3">var</span><span style="color:#d4d4d4">.</span><span style="color:#93d3f3">backend_port</span></div><div style="position:absolute;left:0;top:1074.00px;height:44.75px;line-height:44.75px"><span style="color:#93d3f3">  frontend_port</span><span style="color:#d4d4d4">    = </span><span style="color:#93d3f3">var</span><span style="color:#d4d4d4">.</span><span style="color:#93d3f3">frontend_port</span></div><div style="position:absolute;left:0;top:1118.75px;height:44.75px;line-height:44.75px"><span style="color:#93d3f3">  protocol</span><span style="color:#d4d4d4">         = </span><span style="color:#93d3f3">var</span><span style="color:#d4d4d4">.</span><span style="color:#93d3f3">protocol</span></div><div style="position:absolute;left:0;top:1163.50px;height:44.75px;line-height:44.75px"><span style="color:#93d3f3">  scheduler</span><span style="color:#d4d4d4">        = </span><span style="color:#93d3f3">var</span><span style="color:#d4d4d4">.</span><span style="color:#93d3f3">scheduler</span></div><div style="position:absolute;left:0;top:1208.25px;height:44.75px;line-height:44.75px"><span style="color:#93d3f3">  bandwidth</span><span style="color:#d4d4d4">        = </span><span style="color:#93d3f3">var</span><span style="color:#d4d4d4">.</span><span style="color:#93d3f3">bandwidth</span></div><div style="position:absolute;left:0;top:1253.00px;height:44.75px;line-height:44.75px"><span style="color:#93d3f3">  server_group_id</span><span style="color:#d4d4d4">  = </span><span style="color:#93d3f3">alicloud_slb_server_group</span><span style="color:#d4d4d4">.</span><span style="color:#93d3f3">webserver</span><span style="color:#d4d4d4">.</span><span style="color:#93d3f3">id</span></div><div style="position:absolute;left:0;top:1297.75px;height:44.75px;line-height:44.75px"><span style="color:#f0cc40">}</span></div></div>
<div style="left:1845px;top:141px;width:75px;height:0"></div>
<svg style="position:absolute;left:820px;top:525px" width="30" height="30" viewBox="820 525 30 30"><path d="M831.2,533.5 L831.2,548.3 L835,545.2 L837.7,550.6 L840.3,549.5 L837.8,544.5 L842.4,544.3 Z" fill="#000" stroke="#e8e8e8" stroke-width="1.3" stroke-linejoin="round"/></svg>
<div style="left:640px;top:833px;width:1280px;height:191px;background:#1c1b1e;"></div>
<div style="left:640px;top:833px;width:1280px;height:3px;background:#38373c;"></div>
<div class="t" style="left:688.90px;top:865.99px;font-family:'Liberation Sans', sans-serif;font-size:26px;line-height:26px;font-weight:normal;font-style:normal;letter-spacing:0.757px;color:#9a9a9c;white-space:pre;">PROBLEMS</div>
<div class="t" style="left:897.80px;top:865.99px;font-family:'Liberation Sans', sans-serif;font-size:26px;line-height:26px;font-weight:normal;font-style:normal;letter-spacing:1.380px;color:#9a9a9c;white-space:pre;">OUTPUT</div>
<div class="t" style="left:1071.90px;top:865.99px;font-family:'Liberation Sans', sans-serif;font-size:26px;line-height:26px;font-weight:normal;font-style:normal;letter-spacing:1.071px;color:#e8e8e8;white-space:pre;">TERMINAL</div>
<div class="t" style="left:1474.50px;top:864.64px;font-family:'Liberation Sans', sans-serif;font-size:27px;line-height:27px;font-weight:normal;font-style:normal;letter-spacing:1.475px;color:#c8c8ca;white-space:pre;">zsh - service</div>
<div style="left:1068px;top:904px;width:147px;height:2.5px;background:#e8e8e8;"></div>
<svg style="position:absolute;left:640px;top:833px" width="1280" height="191" viewBox="640 833 1280 191"><g fill="#c8c8c8"><circle cx="1258.5" cy="878" r="2.5"/><circle cx="1271" cy="878" r="2.5"/><circle cx="1283.5" cy="878" r="2.5"/></g><rect x="1428.5" y="862" width="33" height="33" rx="2" fill="none" stroke="#c5c5c7" stroke-width="2.2"/><path d="M1440,869.5 L1449,878.5 L1440,887.5" fill="none" stroke="#c5c5c7" stroke-width="2.2"/><path d="M1686.5,861 V893 M1670.5,877 H1702.5" stroke="#c5c5c7" stroke-width="2.4"/><path d="M1719.5,873 L1728,882 L1736.5,873" fill="none" stroke="#c5c5c7" stroke-width="2.2"/><rect x="1771" y="863" width="31" height="30" rx="2.5" fill="none" stroke="#c5c5c7" stroke-width="2.4"/><path d="M1786.5,863 V893" stroke="#c5c5c7" stroke-width="2.4"/><g fill="none" stroke="#c5c5c7" stroke-width="2.4"><path d="M1835.5,867 H1862"/><path d="M1843,867 V862.5 H1854.5 V867"/><path d="M1838.5,867 V890 Q1838.5,893 1841.5,893 H1856 Q1859,893 1859,890 V867"/><path d="M1844,872 V888 M1848.7,872 V888 M1853.5,872 V888"/></g><path d="M1901,880 L1910.5,870 L1920,880" fill="none" stroke="#c5c5c7" stroke-width="2.2"/></svg>
<div class="t" style="left:691.00px;top:949.52px;font-family:'Liberation Mono', monospace;font-size:30px;line-height:30px;font-weight:bold;font-style:normal;letter-spacing:-1.006px;color:#2fe38a;white-space:pre;">Apply complete! Resources: 5 added, 0 changed, 0 destroyed.</div>
<svg style="position:absolute;left:680px;top:985px" width="40" height="30" viewBox="680 985 40 30"><g fill="none" stroke="#2fe38a" stroke-width="3" stroke-linecap="round" stroke-linejoin="round"><path d="M692,1001.7 H705"/><path d="M701,996.8 L706,1001.7 L701,1006.6"/></g></svg>
<div class="t" style="left:740.70px;top:988.02px;font-family:'Liberation Mono', monospace;font-size:30px;line-height:30px;font-weight:bold;font-style:normal;letter-spacing:-1.006px;color:#27b9d4;white-space:pre;">service</div>
<div style="left:877px;top:981px;width:16px;height:36px;background:transparent;border:2px solid #bdbdbf;box-sizing:border-box"></div>
<div style="left:98px;top:1024px;width:1822px;height:54px;background:#0d78d0;"></div>
<svg style="position:absolute;left:98px;top:1024px" width="1822" height="54" viewBox="98 1024 1822 54"><g fill="none" stroke="#ffffff" stroke-width="2.2"><circle cx="152" cy="1050.5" r="13.5"/><path d="M146.5,1045 L157.5,1056 M157.5,1045 L146.5,1056"/><path d="M222.5,1036 L236.5,1063 H208.5 Z" stroke-linejoin="round"/></g><rect x="221.3" y="1045" width="2.4" height="9" fill="#fff"/><rect x="221.3" y="1056.5" width="2.4" height="2.6" fill="#fff"/><g fill="none" stroke="#f4fcff" stroke-width="2.1"><circle cx="1882" cy="1049.5" r="5.4"/><path d="M1873.2,1065.5 A9.6,9.6 0 0 1 1892.2,1065.5"/><path d="M1880.5,1041 V1036.2 H1901.4 V1049.6 H1897 L1893,1054.5 V1050.5"/></g></svg>
<div class="t" style="left:178.90px;top:1036.95px;font-family:'Liberation Sans', sans-serif;font-size:29px;line-height:29px;font-weight:normal;font-style:normal;letter-spacing:0.000px;color:#ffffff;white-space:pre;">0</div>
<div class="t" style="left:248.90px;top:1036.95px;font-family:'Liberation Sans', sans-serif;font-size:29px;line-height:29px;font-weight:normal;font-style:normal;letter-spacing:0.000px;color:#ffffff;white-space:pre;">0</div>
<div class="t" style="left:1098.60px;top:1036.95px;font-family:'Liberation Sans', sans-serif;font-size:29px;line-height:29px;font-weight:normal;font-style:normal;letter-spacing:1.309px;color:#ffffff;white-space:pre;">Ln 30, Col 2</div>
<div class="t" style="left:1308.20px;top:1036.95px;font-family:'Liberation Sans', sans-serif;font-size:29px;line-height:29px;font-weight:normal;font-style:normal;letter-spacing:1.237px;color:#ffffff;white-space:pre;">Spaces: 2</div>
<div class="t" style="left:1486.50px;top:1036.95px;font-family:'Liberation Sans', sans-serif;font-size:29px;line-height:29px;font-weight:normal;font-style:normal;letter-spacing:2.350px;color:#ffffff;white-space:pre;">UTF-8</div>
<div class="t" style="left:1616.60px;top:1036.95px;font-family:'Liberation Sans', sans-serif;font-size:29px;line-height:29px;font-weight:normal;font-style:normal;letter-spacing:0.700px;color:#ffffff;white-space:pre;">LF</div>
<div class="t" style="left:1692.40px;top:1036.95px;font-family:'Liberation Sans', sans-serif;font-size:29px;line-height:29px;font-weight:normal;font-style:normal;letter-spacing:1.675px;color:#ffffff;white-space:pre;">Terraform</div>
</body></html>
